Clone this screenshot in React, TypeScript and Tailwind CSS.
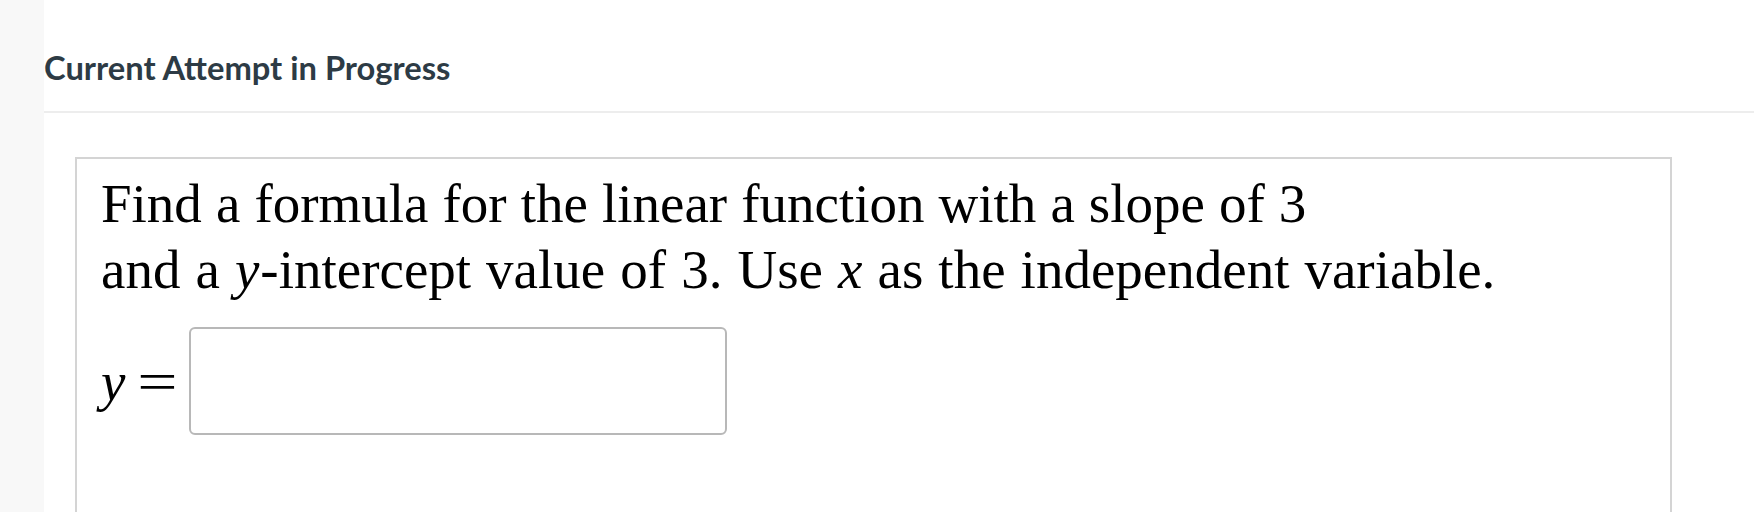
export default function App() {
  const serif = { fontFamily: '"Liberation Serif", "Times New Roman", serif' };
  return (
    <div className="flex h-[512px] w-[1754px] overflow-hidden bg-white">
      <div className="w-[44px] shrink-0 bg-[#f8f8f8]" />
      <div className="flex min-w-0 flex-1 flex-col">
        <div className="flex h-[113px] shrink-0 items-end border-b-2 border-[#ededed] pb-[26px]">
          <h1
            className="text-[32.7px] font-bold leading-none text-[#2d3b45]"
            style={{ fontFamily: 'Lato, "Open Sans", sans-serif' }}
          >
            Current Attempt in Progress
          </h1>
        </div>
        <div className="pl-[31px] pr-[82px] pt-[44px]">
          <div className="h-[400px] border-2 border-b-0 border-[#d4d4d4] px-[24px] pt-[12px] text-black" style={serif}>
            <p className="text-[55px] leading-[66px]">
              <span className="[word-spacing:0.3px]">Find a formula for the linear function with a slope of 3</span>
              <br />
              <span className="[word-spacing:1.3px]">
                and a <i className="mr-[1px]">y</i>-intercept value of 3. Use <i>x</i> as the independent variable.
              </span>
            </p>
            <div className="mt-[24px] flex items-center">
              <span className="text-[55px] leading-none">
                <i>y</i>
              </span>
              <span className="ml-[17px] mr-[16px] inline-block scale-x-[1.3] text-[55px] leading-none">=</span>
              <div className="h-[108px] w-[538px] rounded-[6px] border-2 border-[#b8b8b8] bg-white" />
            </div>
          </div>
        </div>
      </div>
    </div>
  );
}
